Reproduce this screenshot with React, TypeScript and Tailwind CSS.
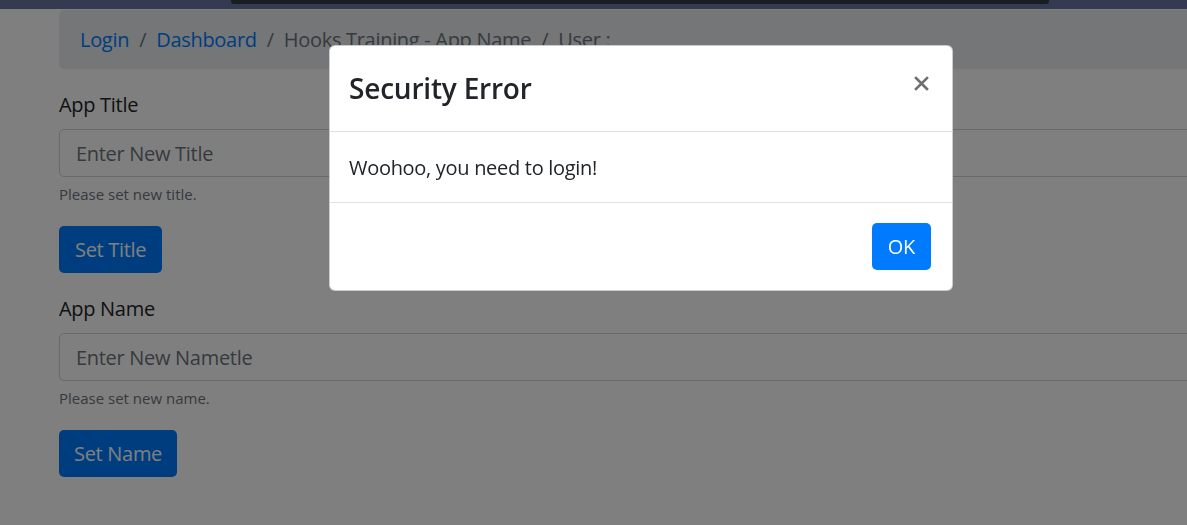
export default function App() {
  return (
    <div className="relative h-[525px] w-full overflow-hidden bg-white font-['Open_Sans',sans-serif] tracking-[-0.3px] text-[#212529]">
      {/* browser strip at the top, stays above the backdrop */}
      <div className="relative z-30 h-[9px] bg-[#343a4f]">
        <div className="ml-[231px] h-[4px] w-[818px] rounded-b-[3px] bg-[#1a1d26]" />
      </div>

      <div className="ml-[59px] w-[1160px]">
        <nav className="mt-[1px] flex h-[59px] items-center rounded-[5px] bg-[#e9ecef] px-[21px] text-[20px]">
          <a className="text-[#007bff]">Login</a>
          <span className="px-[10px] text-[#6c757d]">/</span>
          <a className="text-[#007bff]">Dashboard</a>
          <span className="px-[10px] text-[#6c757d]">/</span>
          <span className="text-[#6c757d]">Hooks Training - App Name</span>
          <span className="px-[10px] text-[#6c757d]">/</span>
          <span className="text-[#6c757d]">User :</span>
        </nav>

        <div className="mt-[21px]">
          <label className="block text-[20px] leading-[30px]">App Title</label>
          <input
            placeholder="Enter New Title"
            className="mt-[9px] block h-[48px] w-full rounded-[5px] border border-[#ced4da] px-[16px] text-[20px] placeholder:text-[#6c757d]"
          />
          <p className="mt-[5px] text-[15px] leading-[24px] tracking-normal text-[#6c757d]">Please set new title.</p>
          <button className="mt-[20px] h-[47px] rounded-[5px] bg-[#007bff] px-[16px] text-[20px] text-white">
            Set Title
          </button>
        </div>

        <div className="mt-[21px]">
          <label className="block text-[20px] leading-[30px]">App Name</label>
          <input
            placeholder="Enter New Nametle"
            className="mt-[9px] block h-[48px] w-full rounded-[5px] border border-[#ced4da] px-[16px] text-[20px] placeholder:text-[#6c757d]"
          />
          <p className="mt-[5px] text-[15px] leading-[24px] tracking-normal text-[#6c757d]">Please set new name.</p>
          <button className="mt-[20px] h-[47px] rounded-[5px] bg-[#007bff] px-[15px] text-[20px] text-white">
            Set Name
          </button>
        </div>
      </div>

      {/* backdrop + dialog */}
      <div className="fixed inset-0 z-10 bg-black/50" />
      <div className="fixed inset-0 z-20">
        <div className="ml-[329px] mt-[45px] h-fit w-[624px] rounded-[6px] border border-black/20 bg-white">
          <div className="flex h-[86px] items-start justify-between border-b border-[#dee2e6] pl-[19px] pr-[23px]">
            <h4 className="mt-[20px] text-[28px] font-semibold leading-[45px] tracking-[-0.2px]">Security Error</h4>
            <button className="mt-[30px] text-[#6f6f6f]">
              <svg width="15" height="15" viewBox="0 0 15 15">
                <path d="M2 2 L13 13 M13 2 L2 13" stroke="currentColor" strokeWidth="2.6" strokeLinecap="square" />
              </svg>
            </button>
          </div>
          <div className="border-b border-[#dee2e6] px-[19px] pb-[19px] pt-[21px] text-[20px] leading-[30px]">
            Woohoo, you need to login!
          </div>
          <div className="flex justify-end pb-[20px] pl-[20px] pr-[21px] pt-[20px]">
            <button className="h-[47px] rounded-[5px] bg-[#007bff] px-[16px] text-[20px] text-white">OK</button>
          </div>
        </div>
      </div>
    </div>
  );
}
